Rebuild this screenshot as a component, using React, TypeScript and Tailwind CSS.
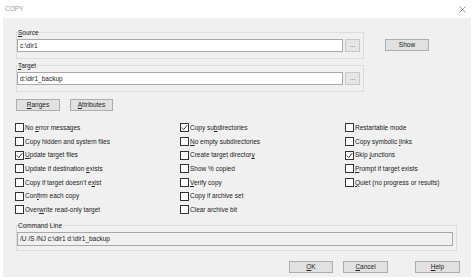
import React from "react";

const U = ({ c }: { c: string }) => <span className="underline underline-offset-[1px]">{c}</span>;

type Item = { pre: string; u?: string; post?: string; checked?: boolean };

const col1: Item[] = [
  { pre: "No ", u: "e", post: "rror messages" },
  { pre: "Copy hidden and system files" },
  { pre: "", u: "U", post: "pdate target files", checked: true },
  { pre: "Update if destination ", u: "e", post: "xists" },
  { pre: "Copy if target doesn't e", u: "x", post: "ist" },
  { pre: "Con", u: "f", post: "irm each copy" },
  { pre: "Over", u: "w", post: "rite read-only target" },
];
const col2: Item[] = [
  { pre: "Copy su", u: "b", post: "directories", checked: true },
  { pre: "", u: "N", post: "o empty subdirectories" },
  { pre: "Create target director", u: "y", post: "" },
  { pre: "Show % copied" },
  { pre: "", u: "V", post: "erify copy" },
  { pre: "Copy if archive set" },
  { pre: "Clear archive bit" },
];
const col3: Item[] = [
  { pre: "Restartable mode" },
  { pre: "Copy symbolic ", u: "l", post: "inks" },
  { pre: "Skip ", u: "j", post: "unctions", checked: true },
  { pre: "", u: "P", post: "rompt if target exists" },
  { pre: "", u: "Q", post: "uiet (no progress or results)" },
];

function Check({ item }: { item: Item }) {
  return (
    <div className="flex h-[13.7px] items-center">
      <div className="relative h-[9px] w-[9px] shrink-0 border border-[#333333] bg-white">
        {item.checked && (
          <svg className="absolute left-0 top-0" width="7" height="7" viewBox="0 0 7 7">
            <path d="M0.8 3.6 L2.7 5.5 L6.3 1.2" fill="none" stroke="#222" strokeWidth="0.9" />
          </svg>
        )}
      </div>
      <span className="ml-[1px] whitespace-nowrap">
        {item.pre}
        {item.u && <U c={item.u} />}
        {item.post}
      </span>
    </div>
  );
}

function Btn({ children, w = "w-[44px]" }: { children: React.ReactNode; w?: string }) {
  return (
    <div className={`flex h-[12px] ${w} items-center justify-center border border-[#adadad] bg-[#e1e1e1]`}>
      {children}
    </div>
  );
}

function PathGroup({ label, value }: { label: React.ReactNode; value: string }) {
  return (
    <div className="flex h-[27px] w-[348px] flex-col border border-[#dcdcdc]">
      <div className="-mt-[4px] h-[7px] pl-[1px] leading-[7px]">{label}</div>
      <div className="mt-[3px] flex items-center">
        <div className="flex h-[13px] w-[326px] items-center border border-[#a8a8a8] bg-white pl-[2px]">{value}</div>
        <div className="ml-[2px] flex h-[13px] w-[15px] items-center justify-center border border-[#c8c8c8] bg-[#e6e6e6] pb-[2px] text-[#555]">...</div>
      </div>
    </div>
  );
}

export default function App() {
  return (
    <div
      className="h-[280px] w-[474px] bg-white text-[6.5px] text-[#222]"
      style={{ fontFamily: '"Liberation Sans", Arial, sans-serif' }}
    >
      <div className="flex h-[18px] items-center justify-between pl-[5px] pr-[8px]">
        <span className="text-[#9a9a9a]">COPY</span>
        <svg width="7" height="7" viewBox="0 0 7 7">
          <path d="M0.5 0.5 L6.5 6.5 M6.5 0.5 L0.5 6.5" stroke="#777" strokeWidth="0.8" />
        </svg>
      </div>
      <div className="mx-[3px] flex h-[259px] flex-col bg-[#f0f0f0] pl-[13px] pt-[14px]">
        <div className="flex items-start">
          <PathGroup label={<><U c="S" />ource</>} value="c:\dir1" />
          <div className="ml-[21px] mt-[7px]">
            <Btn>Show</Btn>
          </div>
        </div>
        <div className="mt-[6px]">
          <PathGroup label={<><U c="T" />arget</>} value="d:\dir1_backup" />
        </div>
        <div className="mt-[7px] flex gap-[10px]">
          <Btn><U c="R" />anges</Btn>
          <Btn w="w-[43px]"><U c="A" />ttributes</Btn>
        </div>
        <div className="mt-[10px] -ml-[1px] grid grid-cols-[165px_165px_1fr]">
          <div>{col1.map((i, k) => <Check key={k} item={i} />)}</div>
          <div>{col2.map((i, k) => <Check key={k} item={i} />)}</div>
          <div>{col3.map((i, k) => <Check key={k} item={i} />)}</div>
        </div>
        <div className="mt-[8px] flex h-[26px] w-[441px] flex-col border border-[#dcdcdc]">
          <div className="-mt-[4px] h-[7px] pl-[1px] leading-[7px]">Command Line</div>
          <div className="mt-[3px] flex h-[14px] w-[436px] items-center border border-[#a8a8a8] bg-[#f0f0f0] pl-[2px]">
            /U /S /NJ c:\dir1 d:\dir1_backup
          </div>
        </div>
        <div className="mt-[10px] flex pl-[273px]">
          <Btn><U c="O" />K</Btn>
          <div className="ml-[10px]"><Btn w="w-[45px]"><U c="C" />ancel</Btn></div>
          <div className="ml-[27px]"><Btn w="w-[45px]"><U c="H" />elp</Btn></div>
        </div>
      </div>
    </div>
  );
}
